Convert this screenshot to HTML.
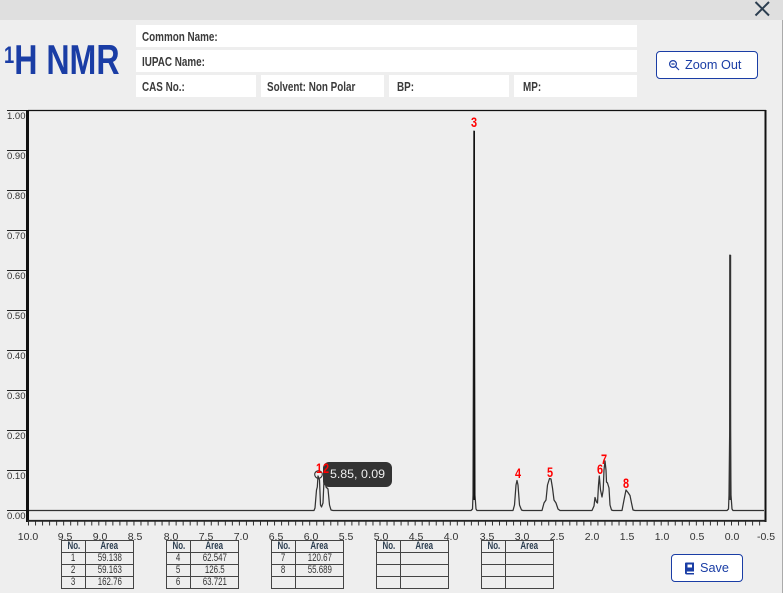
<!DOCTYPE html>
<html>
<head>
<meta charset="utf-8">
<style>
html,body{margin:0;padding:0;}
body{width:783px;height:593px;overflow:hidden;background:#eee;position:relative;font-family:"Liberation Sans",sans-serif;}
.a{position:absolute;}
#top{left:0;top:0;width:783px;height:20px;background:#dfdfdf;}
.box{position:absolute;background:#fff;height:22px;line-height:24px;color:#3a3a3a;font-weight:700;font-size:12.5px;padding-left:6px;box-sizing:border-box;white-space:nowrap;}
.box span{display:inline-block;transform:scaleX(.79);transform-origin:left center;}
#title{left:4px;top:36px;color:#1a3da5;font-weight:700;font-size:42px;line-height:48px;white-space:nowrap;transform:scaleX(.765);transform-origin:left top;}
#title sup{font-size:24px;line-height:0;vertical-align:11px;}
.btn{position:absolute;box-sizing:border-box;border:1px solid #1a3da5;border-radius:4px;background:#fff;color:#1a3da5;font-size:12.7px;}
.btn span{position:absolute;white-space:nowrap;}
.yl{position:absolute;left:7px;font-size:9.5px;line-height:11px;color:#333;}
.xl{position:absolute;top:531px;width:30px;text-align:center;font-size:10.5px;line-height:12px;color:#333;}
.pk{position:absolute;color:#f00;font-weight:700;font-size:14px;line-height:13px;width:12px;text-align:center;transform:scaleX(.78);}
table{position:absolute;top:540px;border-collapse:collapse;font-size:11px;color:#333;table-layout:fixed;}
td,th{border:1px solid #444;height:11px;padding:0;text-align:center;line-height:11px;overflow:hidden;}
td span,th span{display:inline-block;transform:scaleX(.72);transform-origin:center;}
th{color:#2c3e50;font-weight:700;}
#tip{left:323px;top:462px;width:69px;height:25px;background:#333;border-radius:6px;color:#eee;font-size:12.4px;line-height:24px;text-align:center;}
</style>
</head>
<body>
<div class="a" id="top"></div>
<div class="a" style="left:782px;top:20px;width:1px;height:573px;background:#aaa;"></div>
<svg class="a" style="left:752px;top:0" width="20" height="18"><path d="M3.5 2 L17 15.5 M17 2 L3.5 15.5" stroke="#2c3e50" stroke-width="2" fill="none"/></svg>

<div class="a" id="title"><sup>1</sup>H NMR</div>

<div class="box" style="left:136px;top:25px;width:501px;line-height:24px;"><span>Common Name:</span></div>
<div class="box" style="left:136px;top:50px;width:501px;line-height:25px;"><span>IUPAC Name:</span></div>
<div class="box" style="left:136px;top:75px;width:120px;"><span>CAS No.:</span></div>
<div class="box" style="left:261px;top:75px;width:123px;"><span>Solvent: Non Polar</span></div>
<div class="box" style="left:389px;top:75px;width:120px;padding-left:8px;"><span>BP:</span></div>
<div class="box" style="left:514px;top:75px;width:123px;padding-left:9px;"><span>MP:</span></div>

<div class="btn" style="left:656px;top:51px;width:102px;height:28px;">
<svg class="a" style="left:11px;top:7px" width="12" height="12"><circle cx="5" cy="5" r="3.4" fill="none" stroke="#1a3da5" stroke-width="1.2"/><path d="M7.6 7.6 L11 11 M3.4 5 H6.6" stroke="#1a3da5" stroke-width="1.2" fill="none"/></svg>
<span style="left:28px;top:5px;line-height:16px;">Zoom Out</span></div>

<svg class="a" style="left:0;top:0" width="783" height="593">
<g fill="none">
<!-- y ticks -->
<path d="M7 110.5H27M7 150.5H27M7 190.5H27M7 230.5H27M7 270.5H27M7 310.5H27M7 350.5H27M7 390.5H27M7 430.5H27M7 470.5H27M7 510.5H27" stroke="#222" stroke-width="1"/>
<!-- frame -->
<path d="M28 110.5H766" stroke="#111" stroke-width="1.2"/>
<path d="M27.5 110V522" stroke="#111" stroke-width="3"/>
<path d="M765.5 110V522" stroke="#111" stroke-width="2"/>
<path d="M27 520.8H766" stroke="#222" stroke-width="1.8"/>
<!-- x ticks -->
<path d="M28 523.5H766" stroke="#333" stroke-width="4" stroke-dasharray="1 6.03"/>
<!-- spectrum -->
<path d="M29 510.5H314L315 508L316.5 490L317.3 487L318 476L319.5 480L320.5 505L321.5 507L323 503L324 480L325 474L326 487L328 489L329.5 505L331 510L333 510.5H471L472.5 509L473 495L473.6 300L474 131L474.5 300L475 495L476 509L477 510.5H513L514.5 505L516 485L517 480.5L518 485L519.5 505L521.5 510L523 510.5H542L544 503L546 500L547.5 485L549.5 478.5L551 479L552.5 488L554 500L556 503L558 509L560 510.5H592L594 506L595 497.5L596.5 502L597.5 503L598.5 485L599.3 476L600.5 490L602 497L603.2 490L604 470L605 461L606 470L606.5 482L607.5 483L609 488L610 505L611.5 510L613 510.5H622L624 500L626 490L628 492.5L630 495.5L631.5 503L633 510L635 510.5H727L728.5 509L729 495L729.7 430L730 255L730.5 430L731 495L732 509L733 510.5H764" stroke="#333" stroke-width="1.25" stroke-linejoin="round"/>
<path d="M730.2 255V500" stroke="#333" stroke-width="2"/>
<path d="M474.2 131V500" stroke="#111" stroke-width="1.6"/>
<circle cx="318.5" cy="474.5" r="3.8" stroke="#333" stroke-width="1.1"/>
</g>
</svg>

<div class="yl" style="top:111px;">1.00</div>
<div class="yl" style="top:151px;">0.90</div>
<div class="yl" style="top:191px;">0.80</div>
<div class="yl" style="top:231px;">0.70</div>
<div class="yl" style="top:271px;">0.60</div>
<div class="yl" style="top:311px;">0.50</div>
<div class="yl" style="top:351px;">0.40</div>
<div class="yl" style="top:391px;">0.30</div>
<div class="yl" style="top:431px;">0.20</div>
<div class="yl" style="top:471px;">0.10</div>
<div class="yl" style="top:511px;">0.00</div>

<div class="xl" style="left:13px;">10.0</div>
<div class="xl" style="left:50px;">9.5</div>
<div class="xl" style="left:85px;">9.0</div>
<div class="xl" style="left:120px;">8.5</div>
<div class="xl" style="left:156px;">8.0</div>
<div class="xl" style="left:191px;">7.5</div>
<div class="xl" style="left:226px;">7.0</div>
<div class="xl" style="left:261px;">6.5</div>
<div class="xl" style="left:296px;">6.0</div>
<div class="xl" style="left:331px;">5.5</div>
<div class="xl" style="left:366px;">5.0</div>
<div class="xl" style="left:401px;">4.5</div>
<div class="xl" style="left:436px;">4.0</div>
<div class="xl" style="left:472px;">3.5</div>
<div class="xl" style="left:507px;">3.0</div>
<div class="xl" style="left:542px;">2.5</div>
<div class="xl" style="left:577px;">2.0</div>
<div class="xl" style="left:612px;">1.5</div>
<div class="xl" style="left:647px;">1.0</div>
<div class="xl" style="left:682px;">0.5</div>
<div class="xl" style="left:717px;">0.0</div>
<div class="xl" style="left:751px;">-0.5</div>

<div class="a" id="tip">5.85, 0.09</div>
<div class="pk" style="left:313px;top:462px;">1</div>
<div class="pk" style="left:319.5px;top:462px;">2</div>
<div class="pk" style="left:468px;top:116px;">3</div>
<div class="pk" style="left:511.5px;top:467px;">4</div>
<div class="pk" style="left:543.5px;top:466px;">5</div>
<div class="pk" style="left:593.5px;top:463px;">6</div>
<div class="pk" style="left:597.5px;top:453px;">7</div>
<div class="pk" style="left:620px;top:477px;">8</div>

<table style="left:61px;width:72px;"><colgroup><col style="width:24px"><col style="width:48px"></colgroup>
<tr><th><span>No.</span></th><th><span>Area</span></th></tr><tr><td><span>1</span></td><td><span>59.138</span></td></tr><tr><td><span>2</span></td><td><span>59.163</span></td></tr><tr><td><span>3</span></td><td><span>162.76</span></td></tr></table>
<table style="left:166px;width:72px;"><colgroup><col style="width:24px"><col style="width:48px"></colgroup>
<tr><th><span>No.</span></th><th><span>Area</span></th></tr><tr><td><span>4</span></td><td><span>62.547</span></td></tr><tr><td><span>5</span></td><td><span>126.5</span></td></tr><tr><td><span>6</span></td><td><span>63.721</span></td></tr></table>
<table style="left:271px;width:72px;"><colgroup><col style="width:24px"><col style="width:48px"></colgroup>
<tr><th><span>No.</span></th><th><span>Area</span></th></tr><tr><td><span>7</span></td><td><span>120.67</span></td></tr><tr><td><span>8</span></td><td><span>55.689</span></td></tr><tr><td></td><td></td></tr></table>
<table style="left:376px;width:72px;"><colgroup><col style="width:24px"><col style="width:48px"></colgroup>
<tr><th><span>No.</span></th><th><span>Area</span></th></tr><tr><td></td><td></td></tr><tr><td></td><td></td></tr><tr><td></td><td></td></tr></table>
<table style="left:481px;width:72px;"><colgroup><col style="width:24px"><col style="width:48px"></colgroup>
<tr><th><span>No.</span></th><th><span>Area</span></th></tr><tr><td></td><td></td></tr><tr><td></td><td></td></tr><tr><td></td><td></td></tr></table>

<div class="btn" style="left:671px;top:554px;width:72px;height:28px;">
<svg class="a" style="left:12px;top:7px" width="12" height="13"><path d="M1 1.5Q1 .5 2 .5H10V9.5H3Q1 9.5 1 11Q1 12.5 3 12.5H10V11H3" fill="#1a3da5"/><path d="M1 1.5V11L3 9.5H10V.5H2Z" fill="#1a3da5"/><rect x="3.5" y="2.5" width="4.5" height="3" fill="#fff"/></svg>
<span style="left:28px;top:5px;line-height:16px;">Save</span></div>
</body>
</html>
